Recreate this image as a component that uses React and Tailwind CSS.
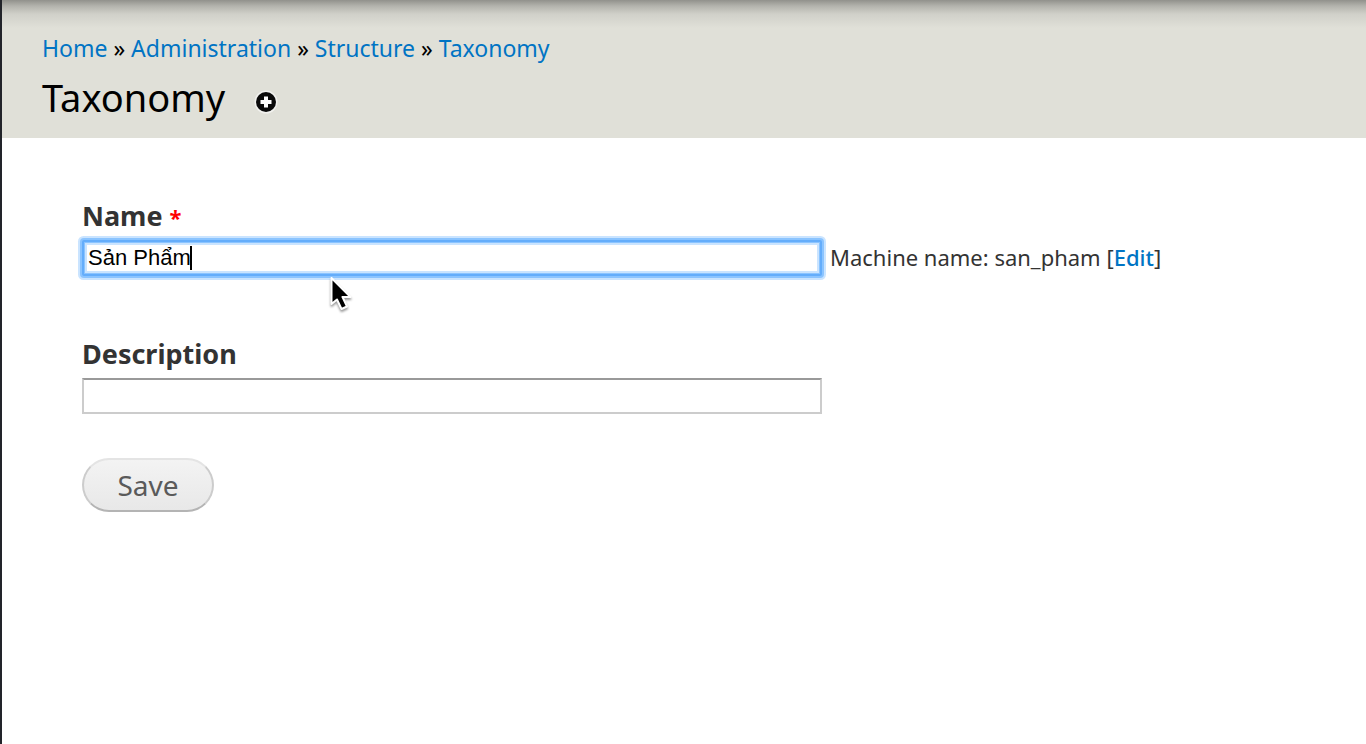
import { Fragment } from "react";

const trail = ["Home", "Administration", "Structure", "Taxonomy"];

function PlusBadge() {
  return (
    <svg viewBox="0 0 24 24" className="size-6" aria-hidden="true">
      <circle cx="12" cy="12" r="11.5" fill="#f1f1ee" />
      <circle cx="12" cy="12" r="10" fill="#0a0a0a" />
      <path d="M10 6.5h4V10h3.500v4H14v3.500h-4V14H6.500v-4H10z" fill="#fff" />
    </svg>
  );
}

function Pointer() {
  return (
    <svg
      viewBox="0 0 24 38"
      className="pointer-events-none absolute top-9 left-[247px] h-[38px] w-6 overflow-visible drop-shadow-[0_2px_1px_rgba(0,0,0,0.4)]"
      aria-hidden="true"
    >
      <path
        d="M2.5 2v26l5.5-4.5 4.5 9.5 5.500-2.500-4.500-9.500h8z"
        fill="#000"
        stroke="#fff"
        strokeWidth="2"
        strokeLinejoin="round"
      />
    </svg>
  );
}

export default function App() {
  return (
    <div className="min-h-screen border-l-2 border-[#22242a] bg-white font-['Noto_Sans','Open_Sans',sans-serif] text-[22px] leading-8 text-[#333]">
      <header className="bg-[#e0e0d8] bg-[linear-gradient(to_bottom,#91918c_0px,#b3b3ad_6px,#d0d0c9_14px,#e0e0d8_28px)] px-10 pt-8 pb-4 text-black">
        <nav aria-label="Breadcrumb" className="text-[23px]">
          {trail.map((name, i) => (
            <Fragment key={name}>
              {i > 0 && " » "}
              <a href="#" className="text-[#0074c4]">{name}</a>
            </Fragment>
          ))}
        </nav>
        <div className="mt-2 flex items-center gap-[29px]">
          <h1 className="text-[38px] leading-[50px]">Taxonomy</h1>
          <button type="button" aria-label="Add to shortcuts" className="mt-2.5">
            <PlusBadge />
          </button>
        </div>
      </header>

      <main className="px-20 pt-[63px]">
        <form>
          <label htmlFor="name" className="block text-[27px] leading-[30px] font-bold">
            Name <span className="text-[22px] leading-none text-[#f00]">*</span>
          </label>
          <div className="mt-[9px] flex items-center gap-2">
            <div className="relative">
              <input
                id="name"
                defaultValue="Sản Phẩm"
                className="block h-9 w-[740px] rounded-xs border-2 border-[#64adfb] bg-white px-1 font-['Liberation_Sans',sans-serif] text-[22px] text-black shadow-[0_0_0_2px_#8bc4ff,0_0_0_4px_#cae4ff,inset_0_0_0_1px_#8bc4ff,inset_0_0_0_3px_#cae4ff] outline-none"
              />
              <span className="absolute top-1.5 left-[108px] h-6 w-0.5 bg-black" />
              <Pointer />
            </div>
            <span className="mb-0.5">
              Machine name: san_pham [<a href="#" className="font-medium text-[#0074c4]">Edit</a>]
            </span>
          </div>

          <label htmlFor="description" className="mt-[63px] block text-[27px] leading-[30px] font-bold">
            Description
          </label>
          <input
            id="description"
            className="mt-[9px] block h-9 w-[740px] border-2 border-[#ccc] border-t-[#999] bg-white px-1 font-['Liberation_Sans',sans-serif] text-[22px] text-black"
          />

          <button
            type="button"
            className="mt-11 block h-[54px] min-w-33 rounded-full border-2 border-[#ccc] border-t-[#e4e4e4] border-b-[#b4b4b4] bg-linear-to-b from-[#f3f3f3] to-[#e8e8e8] px-8 text-[28px] text-[#5a5a5a]"
          >
            Save
          </button>
        </form>
      </main>
    </div>
  );
}
